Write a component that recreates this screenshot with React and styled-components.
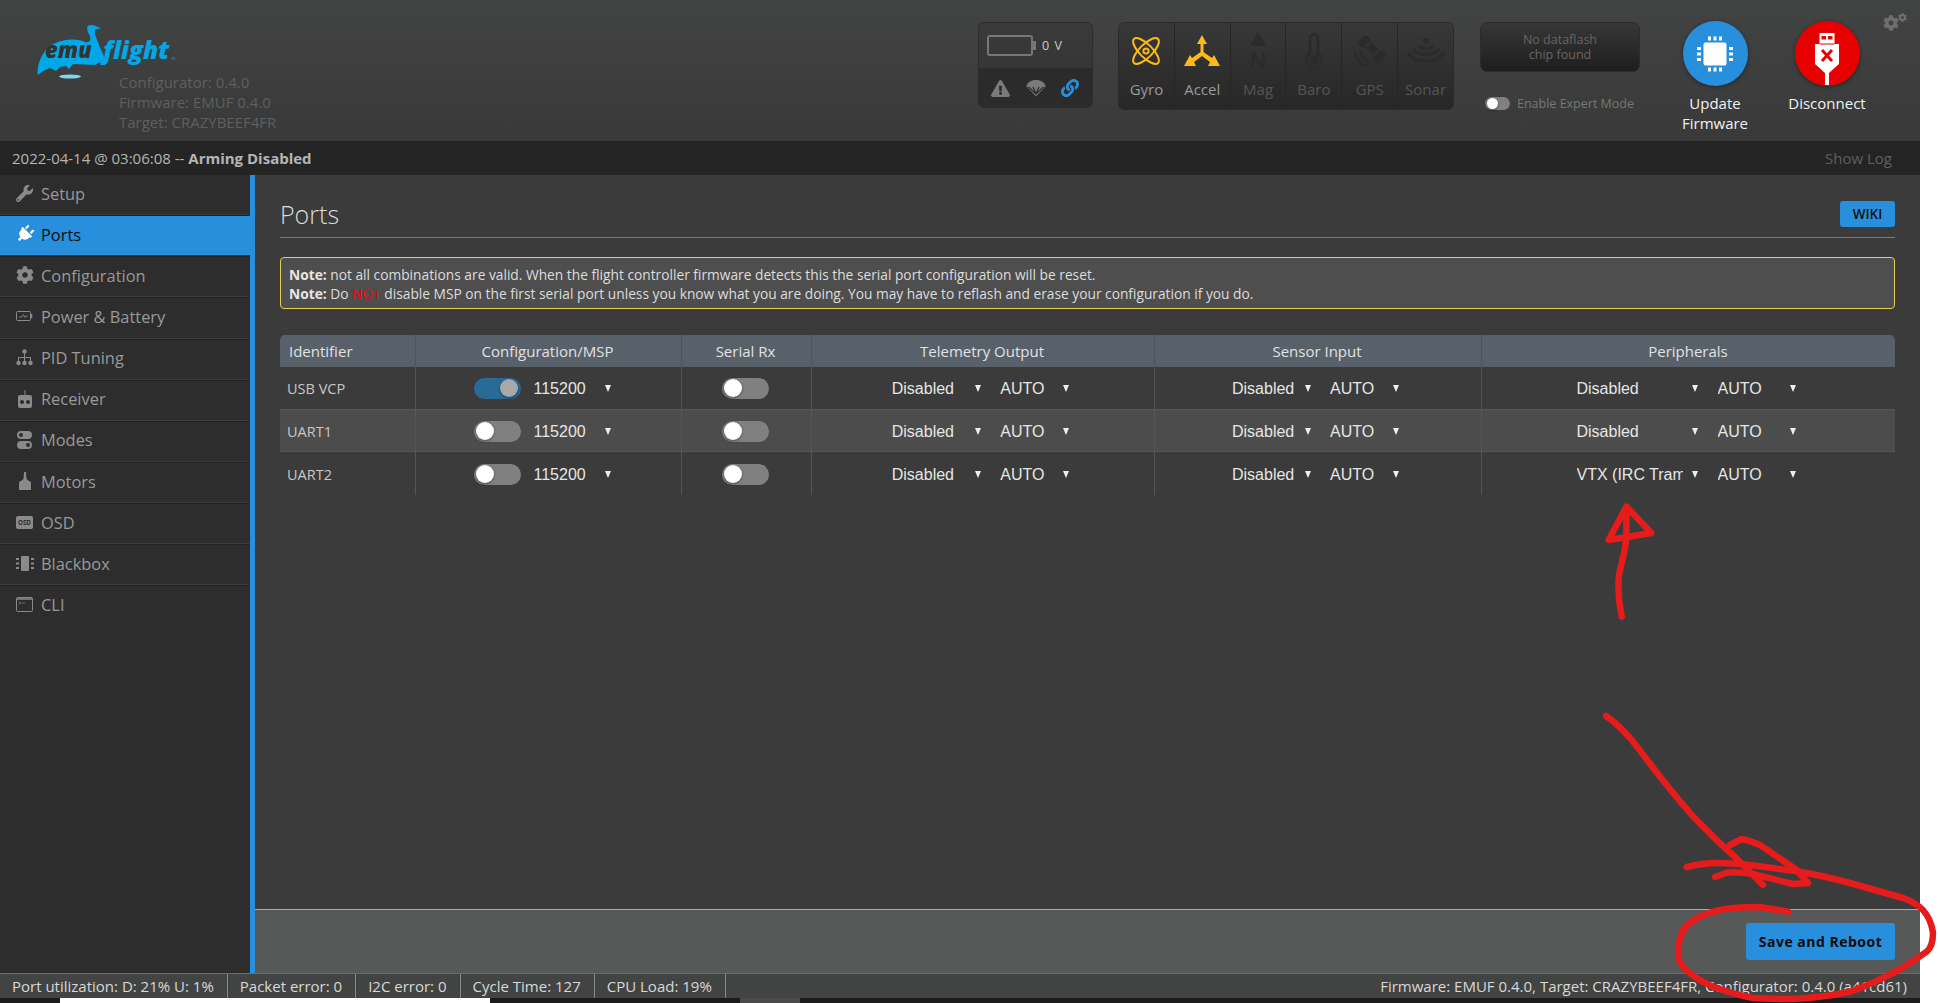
import styled, { createGlobalStyle } from "styled-components";
import { FaWrench, FaPlug, FaCog, FaExclamationTriangle, FaLink } from "react-icons/fa";

const accent = "#278fdc";

const GlobalStyle = createGlobalStyle`
  html, body {
    margin: 0;
    background: #fff;
    overflow: hidden;
    font-family: "Open Sans", "Noto Sans", sans-serif;
  }
`;

const Page = styled.div`
  position: relative;
  width: 1938px;
  height: 1003px;
`;

const Shell = styled.div`
  display: flex;
  flex-direction: column;
  width: 1920px;
  height: 998px;
  background: #3a3b3a;
`;

const Header = styled.header`
  display: flex;
  height: 141px;
  flex: none;
  box-sizing: border-box;
  padding: 15px 13px 0 25px;
  background: linear-gradient(#424443, #383938);
`;

const Brand = styled.div`
  width: 160px;
`;

const Versions = styled.div`
  margin: -18px 0 0 94px;
  width: 200px;
  font-size: 15px;
  line-height: 20px;
  color: #5f5f5f;
  white-space: nowrap;
`;

const HeaderRight = styled.div`
  display: flex;
  margin-left: auto;
  align-items: flex-start;
  padding-top: 7px;
`;

const BatteryBox = styled.div`
  width: 115px;
  height: 86px;
  box-sizing: border-box;
  border: 1px solid #2c2c2c;
  border-radius: 6px;
  overflow: hidden;
  background: linear-gradient(#3a3a3a, #333);
  margin-right: 25px;
`;

const BatteryTop = styled.div`
  display: flex;
  align-items: center;
  height: 45px;
  padding-left: 8px;
  gap: 6px;
`;

const BatteryBody = styled.div`
  width: 46px;
  height: 21px;
  box-sizing: border-box;
  border: 2px solid #777;
  border-radius: 3px;
  position: relative;
  &::after {
    content: "";
    position: absolute;
    right: -5px;
    top: 4px;
    width: 3px;
    height: 9px;
    background: #777;
  }
`;

const Volts = styled.span`
  margin-left: 3px;
  font-size: 12.5px;
  letter-spacing: 1px;
  color: #ccc;
`;

const BatteryBottom = styled.div`
  display: flex;
  align-items: center;
  justify-content: space-between;
  height: 40px;
  padding: 0 13px 0 12px;
  background: #2b2b2b;
`;

const SensorBox = styled.div`
  display: flex;
  width: 336px;
  height: 88px;
  box-sizing: border-box;
  border: 1px solid #2a2a2a;
  border-radius: 6px;
  overflow: hidden;
  background: linear-gradient(#383838, #272727);
  margin-right: 26px;
`;

const Sensor = styled.div`
  flex: 1;
  display: flex;
  flex-direction: column;
  align-items: center;
  border-left: ${(p) => (p.$first ? "none" : "1px solid #262626")};
  color: ${(p) => (p.$on ? "#999" : "#555")};
  font-size: 15px;
`;

const SensorIcon = styled.div`
  display: flex;
  align-items: center;
  justify-content: center;
  height: 56px;
  width: 100%;
`;

const FlashColumn = styled.div`
  display: flex;
  flex-direction: column;
  width: 160px;
`;

const Dataflash = styled.div`
  display: flex;
  align-items: center;
  justify-content: center;
  text-align: center;
  height: 50px;
  box-sizing: border-box;
  border: 1px solid #2c2c2c;
  border-radius: 7px;
  background: linear-gradient(#373737, #1e1e1e);
  color: #666;
  font-size: 12.5px;
  line-height: 15px;
`;

const ExpertRow = styled.div`
  display: flex;
  align-items: center;
  margin-top: 23px;
  padding-left: 5px;
  gap: 7px;
  font-size: 12.5px;
  color: #777;
  white-space: nowrap;
`;

const Toggle = styled.span`
  display: inline-block;
  position: relative;
  flex: none;
  width: ${(p) => (p.$small ? 25 : 47)}px;
  height: ${(p) => (p.$small ? 13 : 21)}px;
  border-radius: 11px;
  background: ${(p) => (p.$on ? "#2a6a99" : "#808080")};
  &::after {
    content: "";
    position: absolute;
    top: 1px;
    ${(p) => (p.$on ? "right: 3px;" : "left: 2px;")}
    width: ${(p) => (p.$small ? 11 : 18)}px;
    height: ${(p) => (p.$small ? 11 : 18)}px;
    border-radius: 50%;
    background: ${(p) => (p.$on ? "#a8a8a8" : "#fff")};
    box-shadow: 0 1px 3px rgba(0, 0, 0, 0.4);
  }
`;

const ActionColumn = styled.div`
  display: flex;
  flex-direction: column;
  align-items: center;
  width: 112px;
  margin-left: ${(p) => p.$offset || 0}px;
  margin-top: -1px;
  color: #f2f2f2;
  font-size: 15px;
  line-height: 20px;
  text-align: center;
`;

const ActionCircle = styled.div`
  display: flex;
  align-items: center;
  justify-content: center;
  width: 65px;
  height: 65px;
  margin-bottom: 7px;
  border-radius: 50%;
  background: ${(p) => p.$bg};
  box-shadow: 0 1px 4px rgba(0, 0, 0, 0.4);
`;

const Cogs = styled.div`
  display: flex;
  align-items: flex-start;
  width: 24px;
  margin-top: -8px;
  color: #6f6f6f;
`;

const SmallCog = styled.span`
  display: flex;
  margin: -1px 0 0 -1px;
`;

const LogBar = styled.div`
  display: flex;
  justify-content: space-between;
  align-items: center;
  flex: none;
  height: 34px;
  padding: 0 28px 0 12px;
  background: #242424;
  font-size: 15px;
  color: #b5b5b5;
`;

const ShowLog = styled.span`
  color: #5f5f5f;
`;

const Middle = styled.div`
  display: flex;
  flex: 1;
  min-height: 0;
`;

const Sidebar = styled.nav`
  flex: none;
  width: 250px;
  background: #2d2d2d;
  border-right: 5px solid ${accent};
`;

const NavItem = styled.div`
  display: flex;
  align-items: center;
  height: 41.15px;
  box-sizing: border-box;
  padding: 0 0 4px 15px;
  gap: 7px;
  font-size: 16.4px;
  color: ${(p) => (p.$active ? "#0e0e0e" : "#999")};
  background: ${(p) => (p.$active ? accent : "transparent")};
  border-bottom: ${(p) => (p.$last ? "none" : "1px solid #222")};
  box-shadow: ${(p) => (p.$last ? "none" : "inset 0 -1px 0 #3a3a3a")};
`;

const NavIcon = styled.span`
  display: flex;
  justify-content: center;
  width: 19px;
  color: ${(p) => (p.$active ? "#fff" : "#8a8a8a")};
`;

const Main = styled.main`
  flex: 1;
  display: flex;
  flex-direction: column;
  min-width: 0;
`;

const Content = styled.div`
  flex: 1;
  padding: 26px 25px 0;
`;

const TitleRow = styled.div`
  display: flex;
  justify-content: space-between;
  height: 36px;
  border-bottom: 1px solid ${accent};
`;

const Title = styled.h1`
  margin: -3px 0 0;
  font-size: 25px;
  font-weight: 300;
  line-height: 32px;
  color: #ddd;
`;

const Wiki = styled.button`
  width: 55px;
  height: 26px;
  border: 0;
  border-radius: 3px;
  background: ${accent};
  color: #111;
  font: 600 13.5px "Open Sans", sans-serif;
`;

const Note = styled.div`
  margin-top: 19px;
  padding: 7px 8px;
  height: 52px;
  box-sizing: border-box;
  border: 1px solid #e6cf4f;
  border-radius: 4px;
  background: #4e4e4e;
  color: #ddd;
  font-size: 13.75px;
  line-height: 19px;
  white-space: nowrap;
  b {
    color: #e6e6e6;
  }
`;

const Red = styled.span`
  color: #f00;
`;

const Table = styled.div`
  margin-top: 26px;
`;

const columns = "135px 266px 130px 343px 327px 415px";

const HeadRow = styled.div`
  display: grid;
  grid-template-columns: ${columns};
  height: 32px;
  background: #58606a;
  border-radius: 5px 5px 0 0;
`;

const HeadCell = styled.div`
  display: flex;
  align-items: center;
  justify-content: ${(p) => (p.$left ? "flex-start" : "center")};
  padding-left: ${(p) => (p.$left ? 9 : 0)}px;
  padding-right: ${(p) => (p.$left ? 0 : 2)}px;
  border-left: ${(p) => (p.$left ? "none" : "1px solid #4c545d")};
  font-size: 15px;
  color: #e2e2e2;
`;

const Row = styled.div`
  display: grid;
  grid-template-columns: ${columns};
  height: 42.7px;
  box-sizing: border-box;
  background: ${(p) => (p.$alt ? "#4c4c4c" : "transparent")};
  border-bottom: ${(p) => (p.$last ? "none" : "1px solid #555")};
`;

const Cell = styled.div`
  display: flex;
  align-items: center;
  justify-content: center;
  padding-top: 2px;
  padding-right: ${(p) => p.$pad || 2}px;
  gap: ${(p) => p.$gap || 16}px;
  border-left: 1px solid #555;
`;

const IdCell = styled.div`
  display: flex;
  align-items: center;
  padding: 2px 0 0 7px;
  font-size: 14.5px;
  color: #c8c8c8;
`;

const Select = styled.div`
  display: flex;
  align-items: center;
  width: ${(p) => p.$w}px;
  font: 16px "Liberation Sans", Arial, sans-serif;
  color: #e6e6e6;
`;

const SelectText = styled.span`
  flex: 1;
  overflow: hidden;
  white-space: nowrap;
`;

const SelectArrow = styled.span`
  flex: none;
  width: 0;
  height: 0;
  margin: 0 3.5px 0 9px;
  border-left: 3.5px solid transparent;
  border-right: 3.5px solid transparent;
  border-top: 7px solid #eee;
`;

const Toolbar = styled.div`
  display: flex;
  justify-content: flex-end;
  align-items: center;
  flex: none;
  height: 64px;
  box-sizing: border-box;
  padding-right: 25px;
  background: #575958;
  border-top: 1px solid #aaa;
`;

const SaveButton = styled.button`
  width: 149px;
  height: 37px;
  border: 0;
  border-radius: 3px;
  background: ${accent};
  color: #0c0c0c;
  font: 700 14px "Open Sans", sans-serif;
  letter-spacing: 0.5px;
`;

const StatusBar = styled.footer`
  display: flex;
  flex: none;
  height: 25px;
  box-sizing: border-box;
  background: #424443;
  border-top: 1px solid #6c6c6c;
  font-size: 15px;
  color: #d8d8d8;
`;

const StatusItem = styled.div`
  display: flex;
  align-items: center;
  padding: 0 13px 0 12px;
  border-right: 1px solid #888;
  white-space: nowrap;
`;

const StatusRight = styled.div`
  display: flex;
  align-items: center;
  margin-left: auto;
  padding-right: 13px;
  white-space: nowrap;
`;

const ScrollStrip = styled.div`
  display: flex;
  width: 1920px;
  height: 5px;
  background: #1c1a1b;
`;

const ScrollPart = styled.div`
  width: ${(p) => p.$w}px;
  margin-left: ${(p) => p.$left}px;
  background: ${(p) => p.$bg};
`;

const Scribble = styled.svg`
  position: absolute;
  left: 0;
  top: 0;
  pointer-events: none;
`;

const Logo = () => (
  <svg width="160" height="70" viewBox="0 0 160 70">
    <path
      fill="#00a8e8"
      d="M12.5 60 C12 50 16 39 24 32 C33 25 48 22 60 27 C65 28 66 25 65 21 C62 16 60 10 66 10 C70 10 72 12 76 13.5 L70 14.5 C69 19 72 24 74 30 C76 36 80 40 79 45 L70 50 L48 49 L44 54 L41 51 L35 52 L31 56 L25 53 L20 55 Z"
    />
    <ellipse cx="45" cy="61.5" rx="11" ry="2" fill="#7fd4f4" />
    <text x="20" y="43" fontFamily="Open Sans" fontWeight="800" fontStyle="italic" fontSize="22" fill="#333">
      emu
    </text>
    <text x="78" y="44" fontFamily="Open Sans" fontWeight="800" fontStyle="italic" fontSize="24.5" fill="#00a8e8">
      flight
    </text>
    <text x="146" y="44.5" fontFamily="Open Sans" fontSize="3" fill="#00a8e8">
      TM
    </text>
  </svg>
);

const Parachute = () => (
  <svg width="20" height="18" viewBox="0 0 20 18" fill="#7a7a7a">
    <path d="M10 1 C5 1 1 3.5 0.5 7.5 L10 17.5 L19.5 7.5 C19 3.5 15 1 10 1 Z" />
    <path d="M2.5 8 L10 15 L17.5 8 M7 8 L10 15 L13 8" fill="none" stroke="#2b2b2b" strokeWidth="1.2" />
  </svg>
);

const GyroIcon = () => (
  <svg width="30" height="30" viewBox="0 0 30 30" fill="none" stroke="#fcb919" strokeWidth="2">
    <ellipse cx="15" cy="15" rx="17" ry="6.5" transform="rotate(45 15 15)" />
    <ellipse cx="15" cy="15" rx="17" ry="6.5" transform="rotate(-45 15 15)" />
    <circle cx="15" cy="15" r="2.6" />
  </svg>
);

const AccelIcon = () => (
  <svg width="36" height="32" viewBox="0 0 36 32" fill="#fcb919">
    <path d="M18 0 L23 9 L19.5 9 L19.5 17 L18 18 L16.5 17 L16.5 9 L13 9 Z" />
    <path d="M18 16 L28 23 L30 20 L36 31 L24 31 L26 27 L18 21 L10 27 L12 31 L0 31 L6 20 L8 23 Z" />
  </svg>
);

const MagIcon = () => (
  <svg width="18" height="38" viewBox="0 0 18 38" fill="#2b2b2b">
    <path d="M9 0 L17 14 L1 14 Z" />
    <text x="9" y="36" textAnchor="middle" fontFamily="Open Sans" fontWeight="700" fontSize="21">
      N
    </text>
  </svg>
);

const BaroIcon = () => (
  <svg width="20" height="36" viewBox="0 0 20 36" fill="none" stroke="#2b2b2b" strokeWidth="2.5">
    <path d="M6 20 L6 5 C6 0 14 0 14 5 L14 20 C22 26 16 35 10 35 C4 35 -2 26 6 20 Z" />
    <circle cx="10" cy="27" r="3.5" fill="#2b2b2b" />
  </svg>
);

const GpsIcon = () => (
  <svg width="32" height="31" viewBox="0 0 32 31" fill="#2b2b2b">
    <g transform="translate(18 13) rotate(45)">
      <rect x="-15" y="-6" width="8" height="12" />
      <rect x="-5" y="-4" width="10" height="8" />
      <rect x="7" y="-6" width="8" height="12" />
    </g>
    <path d="M1 15 C1 22 6 29 14 30 M6 15 C7 20 10 24 14 25" fill="none" stroke="#2b2b2b" strokeWidth="2.2" />
  </svg>
);

const SonarIcon = () => (
  <svg width="38" height="28" viewBox="0 0 38 28" fill="none" stroke="#2b2b2b" strokeWidth="3">
    <circle cx="19" cy="4" r="3" fill="#2b2b2b" stroke="none" />
    <path d="M12 9 C16 13 22 13 26 9 M6 12 C12 19 26 19 32 12 M1 16 C8 27 30 27 37 16" />
  </svg>
);

const ChipIcon = () => (
  <svg width="36" height="36" viewBox="0 0 36 36" fill="#fff">
    <rect x="6.5" y="6.5" width="23" height="23" rx="2" />
    <path d="M11 0.5 h3 v4 h-3 Z M16.5 0.5 h3 v4 h-3 Z M22 0.5 h3 v4 h-3 Z M11 31.5 h3 v4 h-3 Z M16.5 31.5 h3 v4 h-3 Z M22 31.5 h3 v4 h-3 Z M0 11 h4 v3 h-4 Z M0 16.5 h4 v3 h-4 Z M0 22 h4 v3 h-4 Z M32 11 h4 v3 h-4 Z M32 16.5 h4 v3 h-4 Z M32 22 h4 v3 h-4 Z" />
  </svg>
);

const UsbIcon = () => (
  <svg width="24" height="52" viewBox="0 0 24 52" style={{ marginTop: 10 }}>
    <path fill="#fff" d="M4.5 0 H19.5 V11 H24 V31 L14 40 V52 H10 V40 L0 31 V11 H4.5 Z" />
    <path fill="#e60000" d="M6.5 3 H11 V6.5 H6.5 Z M13 3 H17.5 V6.5 H13 Z" />
    <path d="M7 17 L17 28 M17 17 L7 28" stroke="#e60000" strokeWidth="3" fill="none" />
    <path d="M4.5 11 H19.5" stroke="#e60000" strokeWidth="1" />
  </svg>
);

const PowerIcon = () => (
  <svg width="17" height="10" viewBox="0 0 17 10" fill="none" stroke="#8a8a8a">
    <rect x="0.5" y="0.5" width="14" height="9" rx="1" />
    <path d="M15.5 3 V7" strokeWidth="1.5" />
    <path d="M3 6 L6 6 L7.5 3.5 L9 6.5 L10 5 L12 5" strokeWidth="0.8" />
  </svg>
);

const PidIcon = () => (
  <svg width="17" height="17" viewBox="0 0 17 17" fill="#8a8a8a">
    <circle cx="8.5" cy="2.5" r="2.2" />
    <path d="M8 4 H9 V8 H15 V12 H14 V9 H9 V12 H8 V9 H3 V12 H2 V8 H8 Z" />
    <circle cx="2.5" cy="14" r="2.2" />
    <circle cx="8.5" cy="14" r="2.2" />
    <circle cx="14.5" cy="14" r="2.2" />
  </svg>
);

const ReceiverIcon = () => (
  <svg width="16" height="18" viewBox="0 0 16 18" fill="#8a8a8a">
    <rect x="7.5" y="0" width="1" height="6" />
    <rect x="1" y="5" width="14" height="13" rx="2" />
    <circle cx="5" cy="12" r="2" fill="#2d2d2d" />
    <circle cx="11" cy="12" r="2" fill="#2d2d2d" />
  </svg>
);

const ModesIcon = () => (
  <svg width="15" height="18" viewBox="0 0 15 18" fill="#8a8a8a">
    <rect x="0" y="0" width="15" height="8" rx="4" />
    <rect x="0" y="10" width="15" height="8" rx="4" />
    <circle cx="4" cy="4" r="2" fill="#2d2d2d" />
    <circle cx="11" cy="14" r="2" fill="#2d2d2d" />
  </svg>
);

const MotorIcon = () => (
  <svg width="12" height="18" viewBox="0 0 12 18" fill="#8a8a8a">
    <path d="M5 0 H7 L7.5 7 L10 9 H11 L12 11 V18 H0 V11 L1 9 H2 L4.5 7 Z" />
  </svg>
);

const OsdIcon = () => (
  <svg width="17" height="13" viewBox="0 0 17 13">
    <rect width="17" height="13" rx="2" fill="#8a8a8a" />
    <text x="8.5" y="9.2" textAnchor="middle" fontFamily="Open Sans" fontWeight="700" fontSize="6.2" fill="#2d2d2d">
      OSD
    </text>
  </svg>
);

const BlackboxIcon = () => (
  <svg width="18" height="15" viewBox="0 0 18 15" fill="#8a8a8a">
    <rect x="5" y="0" width="8" height="15" rx="1" />
    <path d="M0 2 h3 v2 h-3 Z M0 6.5 h3 v2 h-3 Z M0 11 h3 v2 h-3 Z M15 2 h3 v2 h-3 Z M15 6.5 h3 v2 h-3 Z M15 11 h3 v2 h-3 Z" />
  </svg>
);

const CliIcon = () => (
  <svg width="17" height="15" viewBox="0 0 17 15" fill="none" stroke="#8a8a8a">
    <rect x="0.5" y="0.5" width="16" height="14" rx="1" strokeWidth="1" />
    <path d="M1 2 H16" strokeWidth="1.5" />
    <path d="M3 5 L5 6 L3 7 M6 6 H9" strokeWidth="0.7" />
  </svg>
);

const navItems = [
  ["Setup", <FaWrench size={17} key="i" />],
  ["Ports", <FaPlug size={18} style={{ transform: "rotate(45deg)" }} key="i" />],
  ["Configuration", <FaCog size={18} key="i" />],
  ["Power & Battery", <PowerIcon key="i" />],
  ["PID Tuning", <PidIcon key="i" />],
  ["Receiver", <ReceiverIcon key="i" />],
  ["Modes", <ModesIcon key="i" />],
  ["Motors", <MotorIcon key="i" />],
  ["OSD", <OsdIcon key="i" />],
  ["Blackbox", <BlackboxIcon key="i" />],
  ["CLI", <CliIcon key="i" />],
];

const sensors = [
  ["Gyro", <GyroIcon key="i" />, true],
  ["Accel", <AccelIcon key="i" />, true],
  ["Mag", <MagIcon key="i" />, false],
  ["Baro", <BaroIcon key="i" />, false],
  ["GPS", <GpsIcon key="i" />, false],
  ["Sonar", <SonarIcon key="i" />, false],
];

const ports = [
  { name: "USB VCP", msp: true, peripheral: "Disabled" },
  { name: "UART1", msp: false, peripheral: "Disabled" },
  { name: "UART2", msp: false, peripheral: "VTX (IRC Tramp)" },
];

const PairedSelects = ({ first, firstWidth, secondWidth }) => (
  <>
    <Select $w={firstWidth}>
      <SelectText>{first}</SelectText>
      <SelectArrow />
    </Select>
    <Select $w={secondWidth}>
      <SelectText>AUTO</SelectText>
      <SelectArrow />
    </Select>
  </>
);

const App = () => (
  <Page>
    <GlobalStyle />
    <Shell>
      <Header>
        <Brand>
          <Logo />
          <Versions>
            Configurator: 0.4.0
            <br />
            Firmware: EMUF 0.4.0
            <br />
            Target: CRAZYBEEF4FR
          </Versions>
        </Brand>
        <HeaderRight>
          <BatteryBox>
            <BatteryTop>
              <BatteryBody />
              <Volts>0 V</Volts>
            </BatteryTop>
            <BatteryBottom>
              <FaExclamationTriangle size={19} color="#7a7a7a" />
              <Parachute />
              <FaLink size={18} color={accent} />
            </BatteryBottom>
          </BatteryBox>
          <SensorBox>
            {sensors.map(([label, icon, on], i) => (
              <Sensor key={label} $on={on} $first={i === 0}>
                <SensorIcon>{icon}</SensorIcon>
                {label}
              </Sensor>
            ))}
          </SensorBox>
          <FlashColumn>
            <Dataflash>
              No dataflash
              <br />
              chip found
            </Dataflash>
            <ExpertRow>
              <Toggle $small />
              Enable Expert Mode
            </ExpertRow>
          </FlashColumn>
          <ActionColumn $offset={19}>
            <ActionCircle $bg={accent}>
              <ChipIcon />
            </ActionCircle>
            Update
            <br />
            Firmware
          </ActionColumn>
          <ActionColumn>
            <ActionCircle $bg="#e60000">
              <UsbIcon />
            </ActionCircle>
            Disconnect
          </ActionColumn>
          <Cogs>
            <FaCog size={18} />
            <SmallCog>
              <FaCog size={9} />
            </SmallCog>
          </Cogs>
        </HeaderRight>
      </Header>

      <LogBar>
        <span>
          2022-04-14 @ 03:06:08 -- <b>Arming Disabled</b>
        </span>
        <ShowLog>Show Log</ShowLog>
      </LogBar>

      <Middle>
        <Sidebar>
          {navItems.map(([label, icon], i) => (
            <NavItem key={label} $active={label === "Ports"} $last={i === navItems.length - 1}>
              <NavIcon $active={label === "Ports"}>{icon}</NavIcon>
              {label}
            </NavItem>
          ))}
        </Sidebar>
        <Main>
          <Content>
            <TitleRow>
              <Title>Ports</Title>
              <Wiki>WIKI</Wiki>
            </TitleRow>
            <Note>
              <b>Note:</b> not all combinations are valid. When the flight controller firmware detects this the serial
              port configuration will be reset.
              <br />
              <b>Note:</b> Do <Red>NOT</Red> disable MSP on the first serial port unless you know what you are doing.
              You may have to reflash and erase your configuration if you do.
            </Note>
            <Table>
              <HeadRow>
                <HeadCell $left>Identifier</HeadCell>
                <HeadCell>Configuration/MSP</HeadCell>
                <HeadCell>Serial Rx</HeadCell>
                <HeadCell>Telemetry Output</HeadCell>
                <HeadCell>Sensor Input</HeadCell>
                <HeadCell>Peripherals</HeadCell>
              </HeadRow>
              {ports.map((port, i) => (
                <Row key={port.name} $alt={i === 1} $last={i === ports.length - 1}>
                  <IdCell>{port.name}</IdCell>
                  <Cell $pad={9} $gap={13}>
                    <Toggle $on={port.msp} />
                    <Select $w={81}>
                      <SelectText>115200</SelectText>
                      <SelectArrow />
                    </Select>
                  </Cell>
                  <Cell>
                    <Toggle />
                  </Cell>
                  <Cell>
                    <PairedSelects first="Disabled" firstWidth={92.5} secondWidth={72} />
                  </Cell>
                  <Cell>
                    <PairedSelects first="Disabled" firstWidth={82} secondWidth={72} />
                  </Cell>
                  <Cell>
                    <PairedSelects first={port.peripheral} firstWidth={125} secondWidth={82} />
                  </Cell>
                </Row>
              ))}
            </Table>
          </Content>
          <Toolbar>
            <SaveButton>Save and Reboot</SaveButton>
          </Toolbar>
        </Main>
      </Middle>

      <StatusBar>
        <StatusItem>Port utilization: D: 21% U: 1%</StatusItem>
        <StatusItem>Packet error: 0</StatusItem>
        <StatusItem>I2C error: 0</StatusItem>
        <StatusItem>Cycle Time: 127</StatusItem>
        <StatusItem>CPU Load: 19%</StatusItem>
        <StatusRight>Firmware: EMUF 0.4.0, Target: CRAZYBEEF4FR, Configurator: 0.4.0 (a41cd61)</StatusRight>
      </StatusBar>
    </Shell>
    <ScrollStrip>
      <ScrollPart $left={60} $w={430} $bg="#fff" />
      <ScrollPart $left={250} $w={60} $bg="#4a4a4a" />
    </ScrollStrip>

    <Scribble width="1938" height="1003" viewBox="0 0 1938 1003" fill="none" stroke="#e61b1b" strokeWidth="6.5" strokeLinecap="round" strokeLinejoin="round">
      <path d="M1621.8 616.7 C1618 600 1618 585 1619 575 C1622 560 1626 550 1626.4 535 L1626.4 506.7 L1608.6 540 L1651.4 533 L1626.4 506.7" />
      <path d="M1606 716 C1615 722 1622 729 1630 738 C1640 750 1650 764 1660 776.7 C1675 795 1690 815 1706.7 830 C1718 842 1725 848 1733 855 L1763 885" />
      <path d="M1730 845 L1741.7 839 C1748 840 1755 843 1760 845 L1796.7 870 L1808 883 L1793 884 L1753 874 C1740 872 1732 872 1726.7 872.7 L1715 877" />
      <path d="M1686.7 867 C1695 865 1705 863 1716.7 863 C1728 863 1740 864 1750 865 L1800 871.7 C1820 875 1835 879 1850 883 L1903 898 C1912 901 1918 905 1923 910 C1929 917 1932 925 1933 933 C1933 942 1931 948 1926.7 951.7 C1915 960 1905 967 1893 973 C1880 979 1865 987 1850 991.7 C1830 996 1810 998 1793 999 C1780 999 1765 999 1753 998 C1738 995 1725 991 1713 986.7 C1700 981 1690 974 1683 966.7 C1679 962 1678 958 1678 953 C1678 945 1680 937 1683 930 C1687 925 1693 920 1700 916.7 C1710 912 1722 909 1733 908 C1745 907 1752 907 1760 907 L1788 911.7" />
    </Scribble>
  </Page>
);

export default App;
